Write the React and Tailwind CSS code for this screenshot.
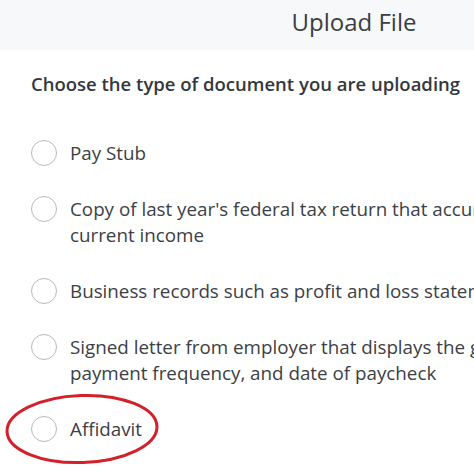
import React from 'react';

const options = [
  'Pay Stub',
  "Copy of last year's federal tax return that accurately reflects your current income",
  'Business records such as profit and loss statements',
  'Signed letter from employer that displays the gross pay amount, payment frequency, and date of paycheck',
  'Affidavit',
];

function App() {
  return (
    <div className="w-[474px] h-[467px] overflow-hidden bg-white font-['Open_Sans',sans-serif] text-[#3b4045]">
      <div className="w-[708px]">
        <div className="h-[50px] bg-[#f7f8fa] flex items-center justify-center">
          <h1 className="text-[24px] leading-none text-[#3a3e43] -mt-[7px]">Upload File</h1>
        </div>

        <div className="pl-[31px] pt-[22px]">
          <h2 className="text-[18.5px] font-semibold leading-[24px] text-[#33383d]">Choose the type of document you are uploading</h2>

          <div className="relative mt-[44px] flex flex-col gap-[30px]">
            {options.map((label) => (
              <label key={label} className="flex items-start gap-[13px] cursor-pointer">
                <span className="w-[26px] h-[26px] shrink-0 rounded-full border-[1.5px] border-[#bababa] bg-white" />
                <span className="w-[590px] text-[18.8px] leading-[26px]">{label}</span>
              </label>
            ))}

            {/* red annotation around the last option */}
            <svg className="absolute left-[-27px] bottom-[-23px] pointer-events-none" width="156" height="72" viewBox="0 0 156 72">
              <ellipse cx="78" cy="36" rx="75" ry="33.5" fill="none" stroke="#d3202b" strokeWidth="3" transform="rotate(-2 78 36)" />
            </svg>
          </div>
        </div>
      </div>
    </div>
  );
}

export default App;
